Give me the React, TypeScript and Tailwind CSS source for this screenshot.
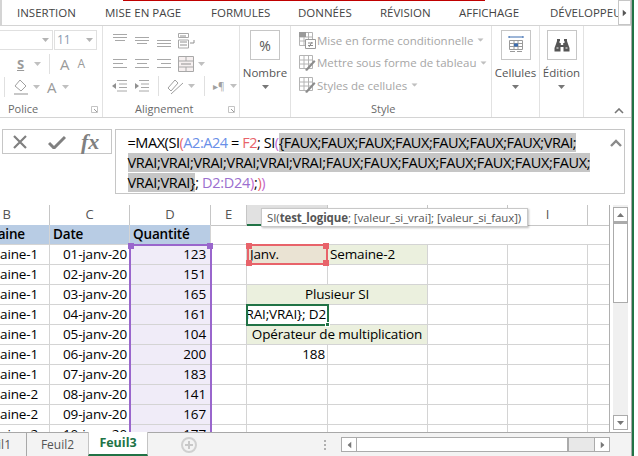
import type { ReactNode } from "react";

const gridCols = "grid grid-cols-[50px_80px_81px_36px_81px_100px_80px_80px_22px]";

const rows = [
  ["Semaine-1", "01-janv-20", "123"],
  ["Semaine-1", "02-janv-20", "151"],
  ["Semaine-1", "03-janv-20", "165"],
  ["Semaine-1", "04-janv-20", "161"],
  ["Semaine-1", "05-janv-20", "104"],
  ["Semaine-1", "06-janv-20", "200"],
  ["Semaine-1", "07-janv-20", "183"],
  ["Semaine-2", "08-janv-20", "141"],
  ["Semaine-2", "09-janv-20", "167"],
  ["Semaine-2", "10-janv-20", "177"],
];

const tabs = [
  { label: "INSERTION", w: "w-[103px] pl-[15px]" },
  { label: "MISE EN PAGE", w: "w-[106px]" },
  { label: "FORMULES", w: "w-[87px]" },
  { label: "DONNÉES", w: "w-[82px]" },
  { label: "RÉVISION", w: "w-[79px]" },
  { label: "AFFICHAGE", w: "w-[91px]" },
];

const Caret = ({ className = "" }: { className?: string }) => (
  <svg width="7" height="4" viewBox="0 0 7 4" className={className}>
    <path d="M0 0h7L3.5 4z" fill="currentColor" />
  </svg>
);

// three short horizontal bars, used by the alignment buttons
const Bars = ({ y = [4, 8, 12], x = [[2, 16], [2, 16], [2, 16]] }: { y?: number[]; x?: number[][] }) => (
  <svg width="18" height="18" viewBox="0 0 18 18" className="text-[#a8a8a8]">
    {y.map((v, i) => (
      <path key={i} d={`M${x[i][0]} ${v + 0.5}H${x[i][1]}`} stroke="currentColor" />
    ))}
  </svg>
);

const TableIcon = ({ brush = false, ne = false }: { brush?: boolean; ne?: boolean }) => (
  <svg width="18" height="18" viewBox="0 0 18 18">
    <path d="M1.5 1.5h13v13h-13zM1.5 6h13M1.5 10h13M6 1.5v13M10.5 1.5v13" fill="none" stroke="#b4b4b4" />
    {brush && <path d="M7 16L16 6l1.5 1.5L9 17z" fill="#8c8c8c" />}
    {ne && (
      <>
        <path d="M1 1h7v5H1z" fill="#9a9a9a" />
        <path d="M7.5 8.5h10v9h-10z" fill="#fff" stroke="#9a9a9a" />
        <path d="M10 12h5M10 14.5h5M11 16l3-5" stroke="#8c8c8c" fill="none" />
      </>
    )}
  </svg>
);

const BigButton = ({ children }: { children: ReactNode }) => (
  <div className="flex h-[30px] w-[30px] items-center justify-center border border-[#c6c6c6] bg-white">{children}</div>
);

const Launcher = () => (
  <svg width="7" height="7" viewBox="0 0 7 7" className="absolute bottom-[4px] right-[4px]">
    <path d="M0.5 0.5h6v6h-6z" fill="none" stroke="#c4c4c4" />
    <path d="M3 3l3 3" stroke="#9a9a9a" />
  </svg>
);

const StyleRow = ({ label, icon }: { label: string; icon: ReactNode }) => (
  <div className="flex h-[23px] items-center gap-[1px]">
    {icon}
    <span className="whitespace-nowrap">{label}</span>
    <Caret className="ml-[3px] scale-90 text-[#c0c0c0]" />
  </div>
);

const Cell = ({ children, className = "" }: { children?: ReactNode; className?: string }) => (
  <div className={`flex h-[20px] items-center overflow-hidden whitespace-nowrap border-b border-r border-[#d4d4d4] ${className}`}>
    {children}
  </div>
);

const Corner = ({ className }: { className: string }) => <div className={`absolute h-[6px] w-[6px] ${className}`} />;

const ribbon = (
  <div className="flex h-[92px] border-b border-[#d4d4d4] text-[#6a6a6a]">
    {/* Police */}
    <div className="relative flex w-[102px] shrink-0 flex-col pt-[4px]">
      <div className="flex h-[22px] gap-[1px]">
        <div className="flex h-[20px] w-[53px] items-center justify-end border border-l-0 border-[#e0e0e0] pr-[3px] text-[#b4b4b4]">
          <Caret />
        </div>
        <div className="flex h-[20px] w-[43px] items-center justify-between border border-[#e0e0e0] px-[2px] pr-[3px] text-[12px] text-[#8a9ab0]">
          11
          <Caret className="text-[#b4b4b4]" />
        </div>
      </div>
      <div className="mt-[3px] flex h-[23px] items-center pl-[17px] text-[#9a9a9a]">
        <span className="w-[17px] text-[13px] font-bold underline">S</span>
        <Caret className="text-[#c0c0c0]" />
        <div className="ml-[8px] h-[20px] w-px bg-[#e0e0e0]" />
        <span className="ml-[10px] text-[15px]">A</span>
        <span className="ml-[8px] text-[12px]">A</span>
      </div>
      <div className="flex h-[23px] items-center pl-[4px] text-[#9a9a9a]">
        <div className="h-[20px] w-px bg-[#e0e0e0]" />
        <svg width="18" height="18" viewBox="0 0 18 18" className="ml-[7px]">
          <path d="M8 2l6 6-5 5-6-5z" fill="#fff" stroke="#a0a0a0" />
          <path d="M2 15h14v2H2z" fill="#c8c8c8" />
        </svg>
        <Caret className="ml-[3px] text-[#c0c0c0]" />
        <span className="ml-[7px] text-[15px]">A</span>
        <Caret className="ml-[5px] text-[#c0c0c0]" />
      </div>
      <div className="mt-[3px] pl-[8px] text-[11px] text-[#6a6a6a]">Police</div>
      <Launcher />
    </div>
    {/* Alignement */}
    <div className="relative flex w-[138px] shrink-0 flex-col border-l border-r border-[#e2e2e2] pl-[8px] pt-[4px]">
      <div className="flex h-[22px] items-center gap-[4px]">
        <Bars y={[2, 5, 8]} x={[[2, 16], [2, 16], [4, 14]]} />
        <Bars y={[5, 8, 11]} x={[[2, 16], [2, 16], [4, 14]]} />
        <Bars y={[8, 11, 14]} x={[[2, 16], [2, 16], [2, 16]]} />
        <svg width="18" height="18" viewBox="0 0 18 18">
          <path d="M1.5 1.5h10v4h-10zM1.5 8h10v8h-10z" fill="none" stroke="#a8a8a8" />
          <path d="M3 4h6M3 10h7M3 13h7M17 8v3h-4" stroke="#909090" fill="none" />
        </svg>
      </div>
      <div className="mt-[1px] flex h-[23px] items-center gap-[4px]">
        <Bars y={[4, 8, 12]} x={[[2, 16], [2, 12], [2, 16]]} />
        <Bars y={[4, 8, 12]} x={[[2, 16], [4, 14], [2, 16]]} />
        <Bars y={[4, 8, 12]} x={[[2, 16], [6, 16], [2, 16]]} />
        <svg width="18" height="18" viewBox="0 0 18 18">
          <path d="M1.5 1.5h15v15h-15zM1.5 6h15M1.5 12h15M9 1.5v4.5M9 12v4.5" fill="#f6f0f0" stroke="#a8a8a8" />
          <path d="M4 9h10" stroke="#909090" />
        </svg>
        <Caret className="-ml-[1px] text-[#c0c0c0]" />
      </div>
      <div className="flex h-[23px] items-center text-[#c0c0c0]">
        <svg width="18" height="18" viewBox="0 0 18 18">
          <path d="M6 3.5h10M8 7h8M8 10.5h8M6 14h10" stroke="#a8a8a8" />
          <path d="M1 9l4-3v6z" fill="#909090" />
        </svg>
        <svg width="18" height="18" viewBox="0 0 18 18" className="ml-[4px]">
          <path d="M6 3.5h10M8 7h8M8 10.5h8M6 14h10" stroke="#a8a8a8" />
          <path d="M6 9L2 6v6z" fill="#909090" />
        </svg>
        <div className="ml-[7px] h-[20px] w-px bg-[#e0e0e0]" />
        <svg width="20" height="18" viewBox="0 0 20 18" className="ml-[7px]">
          <path d="M2 11l7-8 3 3-7 8zM5 17L17 6" fill="none" stroke="#a0a0a0" />
        </svg>
        <Caret className="ml-[2px]" />
        <div className="ml-[9px] h-[20px] w-px bg-[#e0e0e0]" />
        <span className="ml-[8px] text-[10px] text-[#a0a0a0]">▸¶</span>
        <Caret className="ml-[5px]" />
      </div>
      <div className="mt-[3px] pl-[24px] text-[11px] text-[#6a6a6a]">Alignement</div>
      <Launcher />
    </div>
    {/* Nombre */}
    <div className="flex w-[51px] shrink-0 flex-col items-center border-r border-[#e2e2e2] pt-[4px]">
      <BigButton>
        <span className="text-[14px] text-[#555]">%</span>
      </BigButton>
      <span className="mt-[4px] text-[11.5px] leading-[18px] text-[#555]">Nombre</span>
      <Caret className="mt-[3px] text-[#777]" />
    </div>
    {/* Style */}
    <div className="flex w-[201px] shrink-0 flex-col border-r border-[#e2e2e2] pl-[7px] pt-[3px] text-[11.5px] text-[#a6a6a6]">
      <StyleRow label="Mise en forme conditionnelle" icon={<TableIcon ne />} />
      <StyleRow label="Mettre sous forme de tableau" icon={<TableIcon brush />} />
      <StyleRow label="Styles de cellules" icon={<TableIcon brush />} />
      <div className="mt-[4px] pl-[73px] text-[11px] text-[#6a6a6a]">Style</div>
    </div>
    {/* Cellules */}
    <div className="flex w-[48px] shrink-0 flex-col items-center border-r border-[#e2e2e2] pt-[4px]">
      <BigButton>
        <svg width="18" height="18" viewBox="0 0 18 18">
          <path d="M2 1h14M2 0v2M16 0v2" stroke="#3b6cb0" fill="none" />
          <path d="M2.5 4.5h13v9h-13zM2.5 7.5h13M2.5 10.5h13M7 4.5v9M11 4.5v9" fill="none" stroke="#9a9a9a" />
          <path d="M7 7.5h4v3H7z" fill="#3b6cb0" />
          <path d="M3 15.5h5M10 15.5h5" stroke="#9a9a9a" />
        </svg>
      </BigButton>
      <span className="mt-[4px] text-[11.5px] leading-[18px] text-[#555]">Cellules</span>
      <Caret className="mt-[3px] text-[#777]" />
    </div>
    {/* Edition */}
    <div className="flex w-[44px] shrink-0 flex-col items-center border-r border-[#e2e2e2] pt-[4px]">
      <BigButton>
        <svg width="16" height="16" viewBox="0 0 16 16">
          <path d="M3 2h3v2h-.5v2H6.800v2h2.400V6h1.300V4H10V2h3v2l1 3 1.500 4v3.500H9.500V10h-3v4.500H.5V11L2 7l1-3z" fill="#555" />
          <path d="M2.500 11h2M11.500 11h2" stroke="#fff" />
        </svg>
      </BigButton>
      <span className="mt-[4px] text-[11.5px] leading-[18px] text-[#555]">Édition</span>
      <Caret className="mt-[3px] text-[#777]" />
    </div>
    <div className="flex flex-1 items-end justify-end pb-[3px] pr-[7px]">
      <svg width="10" height="6" viewBox="0 0 10 6">
        <path d="M1 5l4-4 4 4" fill="none" stroke="#777" strokeWidth="1.6" />
      </svg>
    </div>
  </div>
);

const formulaBar = (
  <div className="mt-[11px] flex h-[65px] pl-[2px] pr-[6px]">
    <div className="flex h-[25px] w-[110px] items-center border border-[#c6c6c6] pl-[9px]">
      <svg width="16" height="14" viewBox="0 0 16 14">
        <path d="M2 1l12 12M14 1L2 13" stroke="#808080" strokeWidth="2.2" />
      </svg>
      <svg width="18" height="14" viewBox="0 0 18 14" className="ml-[20px]">
        <path d="M1 8l5 5L17 2" fill="none" stroke="#808080" strokeWidth="3" />
      </svg>
      <span className="ml-[15px] font-['Liberation_Serif',serif] text-[22px] font-bold italic leading-none text-[#808080]">fx</span>
    </div>
    <div className="relative ml-[3px] flex-1 border border-[#c6c6c6] pl-[11.5px] pt-[3px] text-[14.5px] leading-[20px] tracking-[-0.32px] text-black [font-family:'Open_Sans',sans-serif]">
      <div className="whitespace-nowrap tracking-[-0.45px]">
        =MAX(SI<span className="text-[#e8636a]">(</span>
        <span className="text-[#6a8fe8]">A2:A24</span> = <span className="text-[#e8636a]">F2</span>; SI
        <span className="text-[#c06ad0]">(</span>
        <span className="bg-[#c6c6c6]">{"{FAUX;FAUX;FAUX;FAUX;FAUX;FAUX;FAUX;VRAI;"}</span>
      </div>
      <div className="whitespace-nowrap">
        <span className="bg-[#c6c6c6]">VRAI;VRAI;VRAI;VRAI;VRAI;VRAI;FAUX;FAUX;FAUX;FAUX;FAUX;FAUX;FAUX;</span>
      </div>
      <div className="whitespace-nowrap">
        <span className="bg-[#c6c6c6]">{"VRAI;VRAI}"}</span>; <span className="text-[#9b6fcf]">D2:D24</span>
        <span className="text-[#c06ad0]">)</span>;<span className="text-[#e8636a]">)</span>
        <span className="text-[#c06ad0]">)</span>
      </div>
      <svg width="12" height="8" viewBox="0 0 12 8" className="absolute right-[2px] top-[9px]">
        <path d="M1 7l5-5 5 5" fill="none" stroke="#8a8a8a" strokeWidth="2.4" />
      </svg>
    </div>
  </div>
);

const sheet = (
  <div className="relative mt-[11px] flex h-[227px]">
    <div className="w-[610px] shrink-0 overflow-hidden border-r border-[#b0b0b0] text-[13.5px] tracking-[-0.15px] text-black [font-family:'Open_Sans',sans-serif]">
      {/* column letters */}
      <div className={`${gridCols} h-[20px] text-[13px] text-[#555]`}>
        {["B", "C", "D", "E", "", "", "", "I", ""].map((c, i) => (
          <div
            key={i}
            className={`flex items-center justify-center border-b border-r border-[#c6c6c6] ${i === 0 ? "pr-[36px]" : ""} ${i === 4 ? "border-b-2 border-b-[#217346] bg-[#e1e1e1]" : ""}`}
          >
            {c}
          </div>
        ))}
      </div>
      <div className="relative h-[207px] overflow-hidden">
        <div className={gridCols}>
          <Cell className="justify-end bg-[#b8cce4] pr-[24px] font-semibold">Semaine</Cell>
          <Cell className="bg-[#b8cce4] pl-[3px] font-semibold">Date</Cell>
          <Cell className="bg-[#b8cce4] pl-[3px] font-semibold">Quantité</Cell>
          <Cell className="col-span-6" />
          {rows.map((r, i) => (
            <div key={i} className="col-span-full grid grid-cols-subgrid">
              <Cell className="justify-end pr-[11px]">{r[0]}</Cell>
              <Cell className="justify-end pr-[2px]">{r[1]}</Cell>
              <Cell className="justify-end bg-[#f0ecf8] pr-[4px]">{r[2]}</Cell>
              <Cell />
              {i === 0 && (
                <>
                  <Cell className="bg-[#eae3d3] pl-[3px]">Janv.</Cell>
                  <Cell className="bg-[#ebf0de] pl-[2px]">Semaine-2</Cell>
                </>
              )}
              {i === 2 && <Cell className="col-span-2 justify-center bg-[#ebf0de]">Plusieur SI</Cell>}
              {i === 3 && (
                <>
                  <Cell className="justify-end pr-[1px]">{"VRAI;VRAI}; D2"}</Cell>
                  <Cell />
                </>
              )}
              {i === 4 && <Cell className="col-span-2 justify-center bg-[#ebf0de]">Opérateur de multiplication</Cell>}
              {i === 5 && (
                <>
                  <Cell className="justify-end pr-[2px]">188</Cell>
                  <Cell />
                </>
              )}
              {(i === 1 || i > 5) && (
                <>
                  <Cell />
                  <Cell />
                </>
              )}
              <Cell />
              <Cell />
              <Cell />
            </div>
          ))}
        </div>
        {/* range and cell selections lie over the grid */}
        <div className="absolute left-[129px] top-[19px] h-[200px] w-[83px] border-2 border-[#9966cc]">
          <Corner className="-left-[3px] -top-[3px] bg-[#9966cc]" />
          <Corner className="-right-[3px] -top-[3px] bg-[#9966cc]" />
        </div>
        <div className="absolute left-[247px] top-[19px] h-[21px] w-[81px] border-2 border-[#e8636a]">
          <Corner className="-left-[3px] -top-[3px] bg-[#e8636a]" />
          <Corner className="-right-[3px] -top-[3px] bg-[#e8636a]" />
          <Corner className="-bottom-[3px] -left-[3px] bg-[#e8636a]" />
          <Corner className="-bottom-[3px] -right-[3px] bg-[#e8636a]" />
        </div>
        <div className="absolute left-[246px] top-[79px] h-[22px] w-[83px] border-2 border-[#217346]">
          <div className="absolute -bottom-[3px] -right-[3px] h-[5px] w-[5px] border border-white bg-[#217346]" />
        </div>
      </div>
    </div>
    {/* vertical scrollbar */}
    <div className="ml-[3px] flex h-[225px] w-[15px] flex-col bg-[#f0f0f0] pt-[2px]">
      <div className="flex h-[15px] items-center justify-center border border-[#ababab] bg-white text-[#777]">
        <Caret className="rotate-180" />
      </div>
      <div className="h-[81px] border border-t-2 border-[#ababab] bg-white" />
      <div className="mt-auto flex h-[15px] items-center justify-center border border-[#ababab] bg-white text-[#777]">
        <Caret />
      </div>
    </div>
    <div className="absolute left-[261px] top-[3px] flex h-[19px] w-[267px] items-center whitespace-nowrap border border-[#c8c8c8] bg-white pl-[5px] text-[11.5px] tracking-[-0.1px] text-[#555] shadow-[1px_1px_2px_rgba(0,0,0,0.25)] [font-family:'Open_Sans',sans-serif]">
      SI(<b className="font-bold">test_logique</b>; [valeur_si_vrai]; [valeur_si_faux])
    </div>
  </div>
);

const sheetTabs = (
  <div className="flex h-[24px] items-stretch bg-[#f3f3f3] text-[12px] text-[#555]">
    <div className="flex w-[27px] items-center justify-end overflow-hidden border-r border-[#a8a8a8] pr-[15px] [border-top:1px_solid_#a8a8a8]">
      <span className="whitespace-nowrap">Feuil1</span>
    </div>
    <div className="flex w-[61px] items-center justify-center [border-top:1px_solid_#a8a8a8]">Feuil2</div>
    <div className="flex w-[60px] items-center justify-center border-b-2 border-l border-r border-b-[#217346] border-l-[#c4c4c4] border-r-[#c4c4c4] bg-white text-[12.5px] font-bold text-[#217346]">
      Feuil3
    </div>
    <div className="flex flex-1 items-center [border-top:1px_solid_#a8a8a8]">
      <div className="ml-[33px] flex h-[16px] w-[16px] items-center justify-center rounded-full border-2 border-[#d0d0d0] text-[#c8c8c8]">
        <svg width="8" height="8" viewBox="0 0 8 8">
          <path d="M4 0v8M0 4h8" stroke="currentColor" strokeWidth="2" />
        </svg>
      </div>
      <div className="ml-[127px] flex flex-col gap-[2px]">
        <div className="h-[2px] w-[2px] bg-[#b0b0b0]" />
        <div className="h-[2px] w-[2px] bg-[#b0b0b0]" />
        <div className="h-[2px] w-[2px] bg-[#b0b0b0]" />
      </div>
      <div className="ml-[15px] flex h-[15px] w-[269px] border border-[#ababab] bg-[#e8e8e8] text-[#777]">
        <div className="flex w-[15px] items-center justify-center border-r border-[#ababab] bg-white">
          <Caret className="rotate-90" />
        </div>
        <div className="w-[212px] border-r-2 border-[#ababab] bg-white" />
        <div className="ml-auto flex w-[15px] items-center justify-center border-l border-[#ababab] bg-white">
          <Caret className="-rotate-90" />
        </div>
      </div>
    </div>
  </div>
);

export default function App() {
  return (
    <div className="flex h-[456px] w-[638px] overflow-hidden bg-white text-black [font-family:'Open_Sans',sans-serif]">
      <div className="flex w-[631px] shrink-0 flex-col">
        {/* ribbon tabs */}
        <div className="relative flex h-[26px] shrink-0 items-center border-b border-l-2 border-[#d4d4d4] pr-[13px] text-[11.5px] text-[#444]">
          <div className="absolute left-[121px] top-0 h-px w-[362px] bg-[#c00000]" />
          {tabs.map((t) => (
            <div key={t.label} className={`shrink-0 whitespace-nowrap ${t.w}`}>
              {t.label}
            </div>
          ))}
          <div className="flex-1 overflow-hidden whitespace-nowrap">DÉVELOPPEUR</div>
          <div className="absolute right-0 top-0 flex h-[25px] w-[13px] items-center justify-center border border-[#c6c6c6] bg-white">
            <Caret className="-rotate-90 text-[#555]" />
          </div>
        </div>
        {ribbon}
        {formulaBar}
        {sheet}
        {sheetTabs}
      </div>
      <div className="h-full w-[3px] shrink-0 border-l border-[#a8a8a8] bg-[#217346]" />
    </div>
  );
}
